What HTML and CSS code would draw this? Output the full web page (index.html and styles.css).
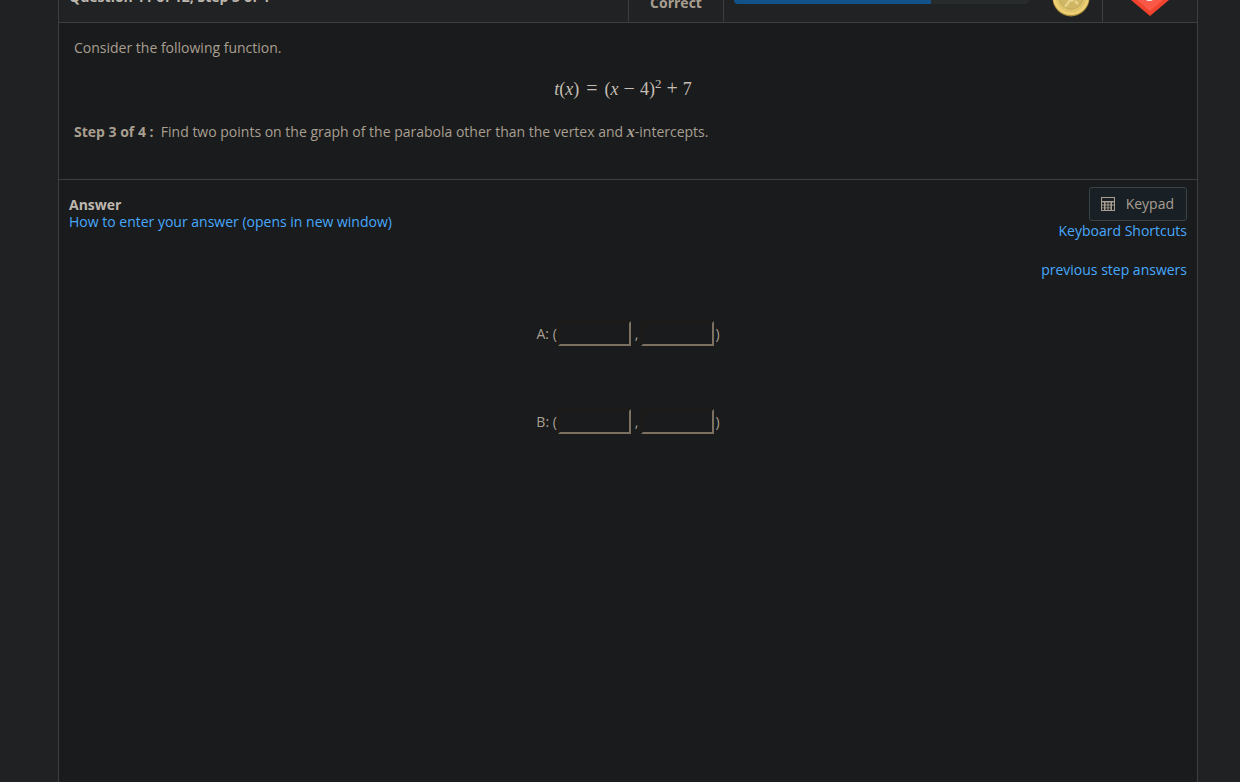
FILE: index.html
```html
<!DOCTYPE html>
<html lang="en">
<head>
<meta charset="utf-8">
<title>Question 11 of 12</title>
<link rel="stylesheet" href="styles.css">
</head>
<body>
<main class="lesson">
  <header class="status">
    <h1 class="status-title">Question 11 of 12, Step 3 of 4</h1>
    <div class="status-correct">Correct</div>
    <div class="status-progress"><div class="track"><div class="fill" style="width:66.7%"></div></div></div>
    <div class="status-coin">
      <svg width="38" height="38" viewBox="0 0 38 38" aria-hidden="true">
        <circle cx="19" cy="19" r="18.5" fill="#a98b3b"/>
        <circle cx="19" cy="18" r="18" fill="#efd276"/>
        <circle cx="19" cy="18.3" r="15.3" fill="#dfc46c"/>
        <circle cx="19" cy="18" r="12.4" fill="#bfa657"/>
        <circle cx="19" cy="18" r="11.6" fill="#cfb766"/>
        <path d="M13 28L24 13M19 22q3-1 3-4M23 22l3 3" fill="none" stroke="#ecd891" stroke-width="2"/>
      </svg>
    </div>
    <div class="status-lives">
      <svg width="40" height="36" viewBox="0 0 40 36" aria-hidden="true">
        <path d="M20 36L1 20C-3 13 0 3 8 1c5-1 10 1 12 5 2-4 7-6 12-5 8 2 11 12 7 19z" fill="#f2432f"/>
        <path d="M20 31L5 18C2 12 4 5 9 4c5-1 9 2 11 6 2-4 6-7 11-6 5 1 7 8 4 14z" fill="#fa5947"/>
      </svg>
      <span class="lives-count">3</span>
    </div>
  </header>

  <section class="question">
    <p>Consider the following function.</p>
    <p class="equation"><i>t</i>(<i>x</i>)<span class="op rel">=</span>(<i>x</i><span class="op">−</span>4)<sup>2</sup><span class="op">+</span>7</p>
    <p><b>Step 3 of 4 :</b>&nbsp; Find two points on the graph of the parabola other than the vertex and <i class="var">x</i>-intercepts.</p>
  </section>

  <section class="answer">
    <div class="answer-head">
      <div class="answer-intro">
        <h2>Answer</h2>
        <a href="#help">How to enter your answer (opens in new window)</a>
      </div>
      <div class="tools">
        <button class="keypad" type="button">
          <svg width="14" height="14" viewBox="0 0 14 14" aria-hidden="true">
            <path fill="#a89f91" fill-rule="evenodd" d="M0 0h14v14H0zM1 1v3h12V1zM1 5.500v2h2v-2zM4.500 5.500v2h2v-2zM7.500 5.500v2h2v-2zM11 5.500v2h2v-2zM1 8.500v2h2v-2zM4.500 8.500v2h2v-2zM7.500 8.500v2h2v-2zM11 8.500v4.500h2V8.500zM1 11.300v1.700h2v-1.700zM4.500 11.300v1.700h2v-1.700zM7.500 11.300v1.700h2v-1.700z"/>
          </svg>
          Keypad
        </button>
        <a href="#shortcuts">Keyboard Shortcuts</a>
        <a class="previous" href="#previous">previous step answers</a>
      </div>
    </div>
    <form class="points">
      <div class="point"><span>A: (</span><input type="text" aria-label="Point A, x"><span class="comma">,</span><input type="text" aria-label="Point A, y"><span class="close">)</span></div>
      <div class="point"><span>B: (</span><input type="text" aria-label="Point B, x"><span class="comma">,</span><input type="text" aria-label="Point B, y"><span class="close">)</span></div>
    </form>
  </section>
</main>
</body>
</html>
```
FILE: styles.css
```css
* { box-sizing: border-box; }
body {
  margin: 0;
  height: 100vh;
  overflow: hidden;
  background: #202123;
  color: #a89f91;
  font: 14px/20px "Open Sans", "Noto Sans", sans-serif;
}
h1, h2, p { margin: 0; font-size: 14px; }
a { color: #47a9fc; text-decoration: none; }

.lesson {
  display: flex;
  flex-direction: column;
  min-height: calc(100vh + 40px);
  margin: -40px 42px 0 58px;
  border: 1px solid #3c3e40;
  border-bottom: 0;
  background: #1a1b1c;
}

.status {
  display: flex;
  height: 62px;
  border-bottom: 1px solid #3c3e40;
  background: #202223;
}
.status > div + div { border-left: 1px solid #3c3e40; }
.status-title { flex: 1; padding: 26px 10px 0; color: #bdb7af; }
.status-correct {
  width: 95px;
  padding-top: 32px;
  border-left: 1px solid #3c3e40;
  font-weight: bold;
  text-align: center;
}
.status-progress { width: 316px; padding: 23px 10px 0; }
.track { height: 20px; overflow: hidden; border-radius: 4px; background: #282b2c; }
.fill { height: 100%; background: #115388; }
.status .status-coin { width: 63px; padding: 18px 0 0 13px; border-left: 0; }
.status-lives { position: relative; width: 95px; padding: 19px 0 0 27px; }
.lives-count {
  position: absolute;
  top: 25px;
  left: 0;
  width: 100%;
  color: #e8e6e3;
  font-size: 13px;
  font-weight: bold;
  text-align: center;
}

.question {
  height: 157px;
  padding: 15px;
  border-bottom: 1px solid #3c3e40;
}
.equation {
  margin: 21px 0 23px;
  padding-right: 10px;
  color: #c4beb5;
  font: 18px/20px "Liberation Serif", serif;
  text-align: center;
}
.equation sup { font-size: 13px; line-height: 0; vertical-align: 7px; }
.op { margin: 0 5px; font-size: 20px; line-height: 0; }
.rel { margin: 0 7px; }
.var { font: italic bold 16px/16px "Liberation Serif", serif; }

.answer { flex: 1; padding: 7px 10px; }
.answer-head { display: flex; justify-content: space-between; }
.answer-intro { padding-top: 9px; line-height: 17px; }
.answer-intro h2 { color: #bdb7af; }
.tools { display: flex; flex-direction: column; align-items: flex-end; }
.previous { margin-top: 19px; }
.keypad {
  display: flex;
  align-items: center;
  gap: 11px;
  height: 34px;
  padding: 0 12px 0 11px;
  border: 1px solid #3a4446;
  border-radius: 3px;
  background: #182026;
  color: inherit;
  font: inherit;
}

.points {
  display: flex;
  flex-direction: column;
  align-items: center;
  gap: 63px;
  margin-top: 41px;
}
.point { display: flex; align-items: center; }
.point input {
  width: 73px;
  height: 25px;
  margin-left: 1px;
  padding: 1px 2px;
  border: 2px solid;
  border-color: #1f1b17 #7c7061 #7c7061 #1f1b17;
  background: #1a1b1c;
  color: inherit;
  font: inherit;
}
.comma { margin: 0 2px 0 4px; }
.close { margin-left: 1px; }
```
